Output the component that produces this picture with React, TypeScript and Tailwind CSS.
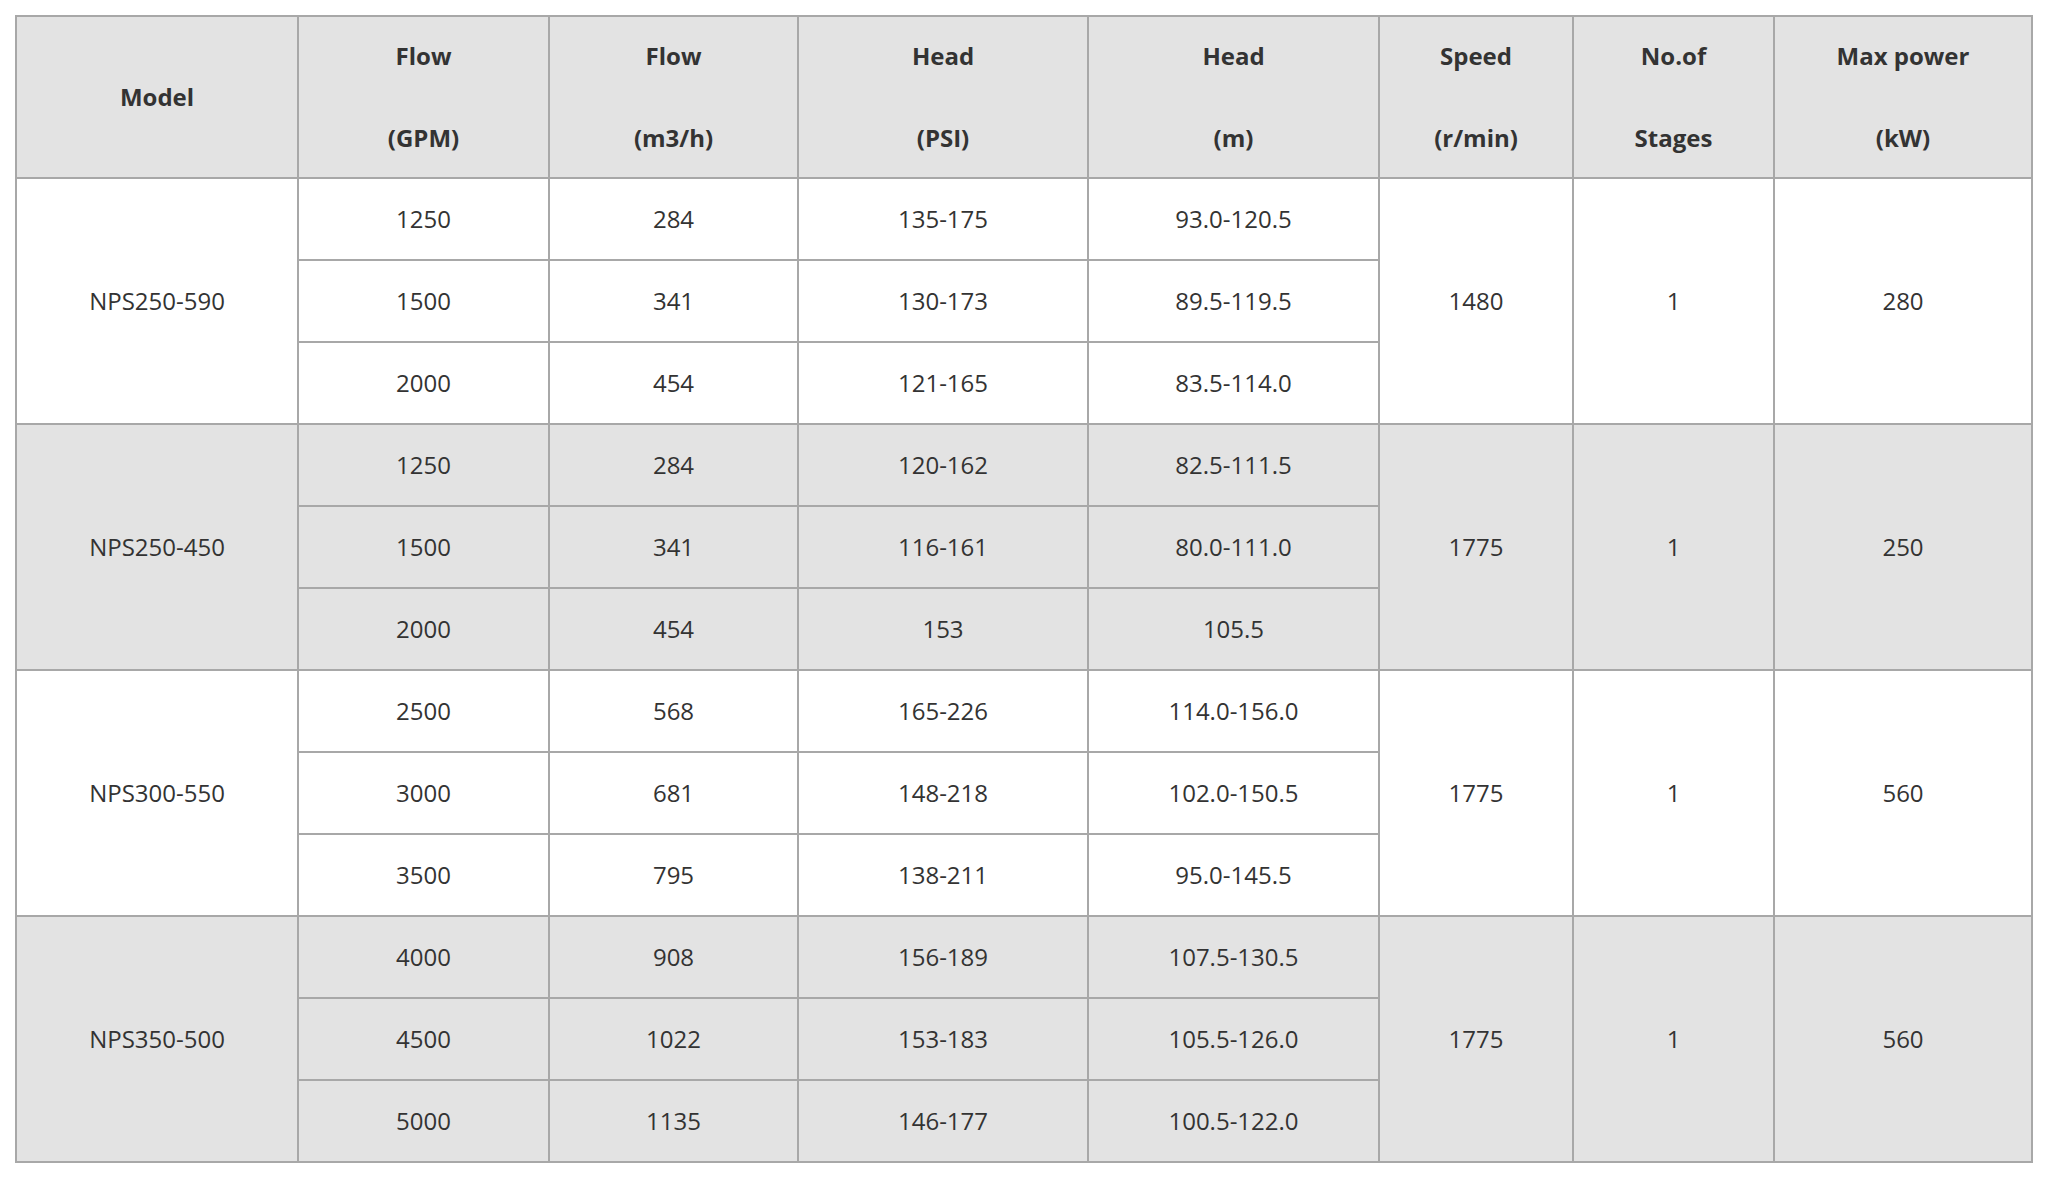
import React from "react";

type Group = {
  model: string;
  speed: string;
  stages: string;
  power: string;
  rows: [string, string, string, string][];
  shaded: boolean;
};

const HEADERS: [string, string][] = [
  ["Flow", "(GPM)"],
  ["Flow", "(m3/h)"],
  ["Head", "(PSI)"],
  ["Head", "(m)"],
  ["Speed", "(r/min)"],
  ["No.of", "Stages"],
  ["Max power", "(kW)"],
];

const GROUPS: Group[] = [
  {
    model: "NPS250-590",
    speed: "1480",
    stages: "1",
    power: "280",
    shaded: false,
    rows: [
      ["1250", "284", "135-175", "93.0-120.5"],
      ["1500", "341", "130-173", "89.5-119.5"],
      ["2000", "454", "121-165", "83.5-114.0"],
    ],
  },
  {
    model: "NPS250-450",
    speed: "1775",
    stages: "1",
    power: "250",
    shaded: true,
    rows: [
      ["1250", "284", "120-162", "82.5-111.5"],
      ["1500", "341", "116-161", "80.0-111.0"],
      ["2000", "454", "153", "105.5"],
    ],
  },
  {
    model: "NPS300-550",
    speed: "1775",
    stages: "1",
    power: "560",
    shaded: false,
    rows: [
      ["2500", "568", "165-226", "114.0-156.0"],
      ["3000", "681", "148-218", "102.0-150.5"],
      ["3500", "795", "138-211", "95.0-145.5"],
    ],
  },
  {
    model: "NPS350-500",
    speed: "1775",
    stages: "1",
    power: "560",
    shaded: true,
    rows: [
      ["4000", "908", "156-189", "107.5-130.5"],
      ["4500", "1022", "153-183", "105.5-126.0"],
      ["5000", "1135", "146-177", "100.5-122.0"],
    ],
  },
];

const cell = "border-2 border-[#a8a8a8] text-center align-middle p-0";

export default function App() {
  return (
    <div className="min-h-screen bg-white pt-[15px] pl-[15px] font-['Open_Sans',sans-serif] text-[24px] text-[#333333]">
      <table className="w-[2016px] table-fixed border-collapse">
        <colgroup>
          <col className="w-[282px]" />
          <col className="w-[251px]" />
          <col className="w-[249px]" />
          <col className="w-[290px]" />
          <col className="w-[291px]" />
          <col className="w-[194px]" />
          <col className="w-[201px]" />
          <col className="w-[258px]" />
        </colgroup>
        <thead>
          <tr className="bg-[#e3e3e3]">
            <th className={`${cell} font-bold`}>
              <div className="flex h-[160px] items-center justify-center">Model</div>
            </th>
            {HEADERS.map(([top, bottom], i) => (
              <th key={i} className={`${cell} font-bold`}>
                <div className="flex h-[160px] flex-col items-center justify-center">
                  <div className="shrink-0 leading-[82px]">{top}</div>
                  <div className="shrink-0 leading-[82px]">{bottom}</div>
                </div>
              </th>
            ))}
          </tr>
        </thead>
        <tbody>
          {GROUPS.map((g) =>
            g.rows.map((r, i) => (
              <tr
                key={g.model + i}
                className={`h-[82px] ${g.shaded ? "bg-[#e3e3e3]" : "bg-white"}`}
              >
                {i === 0 && (
                  <td rowSpan={3} className={cell}>
                    {g.model}
                  </td>
                )}
                {r.map((v, j) => (
                  <td key={j} className={cell}>
                    {v}
                  </td>
                ))}
                {i === 0 && (
                  <>
                    <td rowSpan={3} className={cell}>
                      {g.speed}
                    </td>
                    <td rowSpan={3} className={cell}>
                      {g.stages}
                    </td>
                    <td rowSpan={3} className={cell}>
                      {g.power}
                    </td>
                  </>
                )}
              </tr>
            ))
          )}
        </tbody>
      </table>
    </div>
  );
}
